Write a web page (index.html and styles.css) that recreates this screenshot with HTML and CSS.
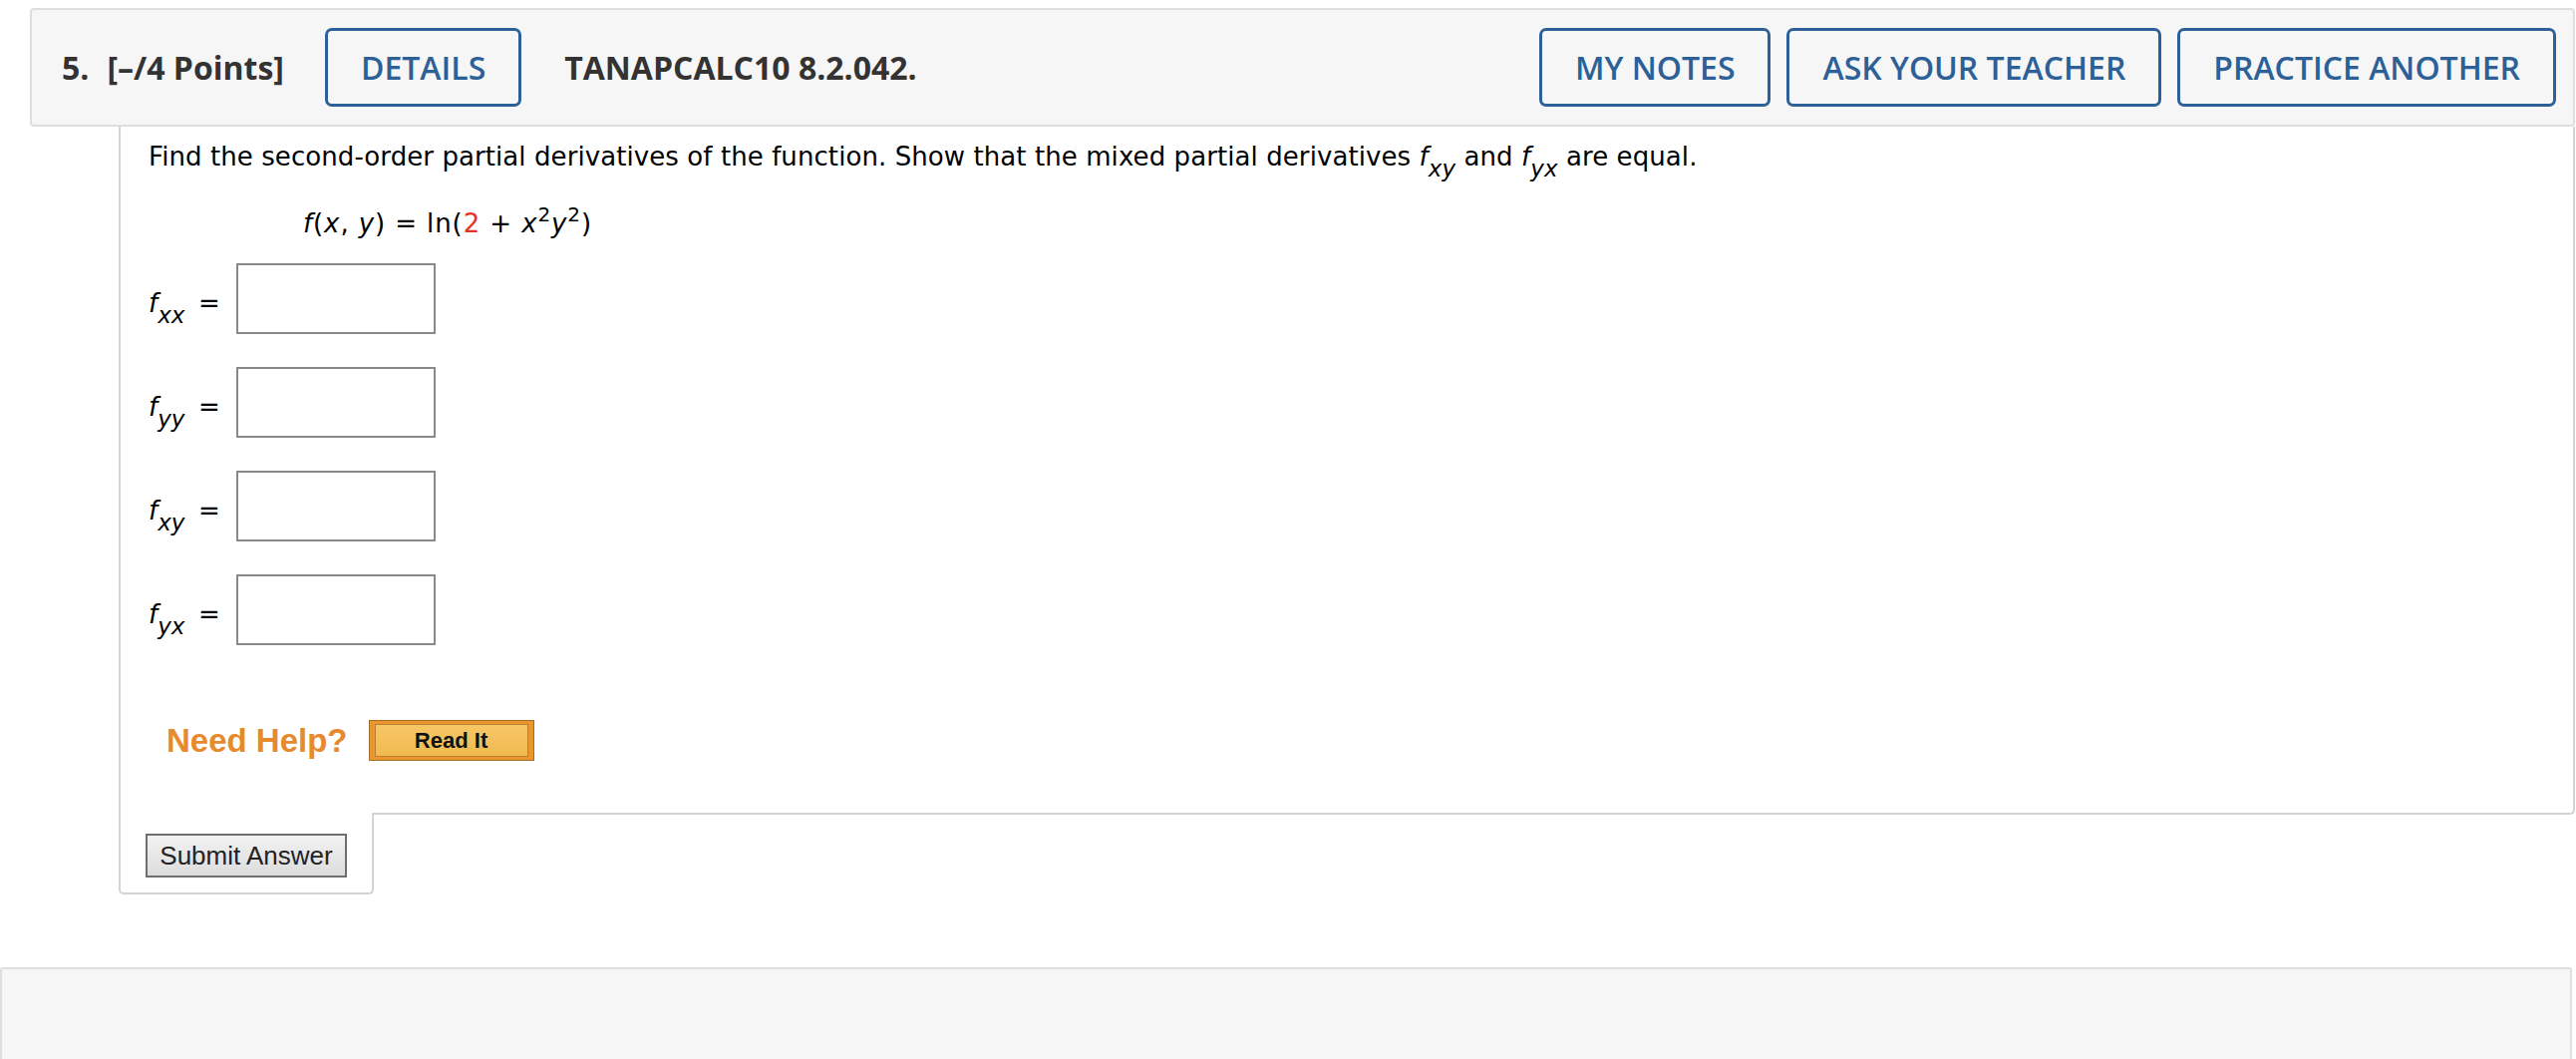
FILE: index.html
```html
<!DOCTYPE html>
<html lang="en">
<head>
<meta charset="utf-8">
<title>Question 5</title>
<link rel="stylesheet" href="styles.css">
</head>
<body>
<div class="question">
  <div class="qhead">
    <span class="qnum">5.</span>
    <span class="qpoints">[–/4 Points]</span>
    <button class="hbtn details">DETAILS</button>
    <span class="qref">TANAPCALC10 8.2.042.</span>
    <div class="hactions">
      <button class="hbtn">MY NOTES</button>
      <button class="hbtn">ASK YOUR TEACHER</button>
      <button class="hbtn">PRACTICE ANOTHER</button>
    </div>
  </div>
  <div class="qbody">
    <p class="prompt">Find the second-order partial derivatives of the function. Show that the mixed partial derivatives <i>f</i><i class="sub">xy</i> and <i>f</i><i class="sub">yx</i> are equal.</p>
    <p class="formula"><i>f</i>(<i>x</i>, <i>y</i>) = ln(<span class="red">2</span> + <i>x</i><span class="sup">2</span><i>y</i><span class="sup">2</span>)</p>
    <div class="answers">
      <div class="arow"><span class="lbl"><i>f</i><i class="sub">xx</i></span><span class="eq">=</span><input class="ans" type="text"></div>
      <div class="arow"><span class="lbl"><i>f</i><i class="sub">yy</i></span><span class="eq">=</span><input class="ans" type="text"></div>
      <div class="arow"><span class="lbl"><i>f</i><i class="sub">xy</i></span><span class="eq">=</span><input class="ans" type="text"></div>
      <div class="arow"><span class="lbl"><i>f</i><i class="sub">yx</i></span><span class="eq">=</span><input class="ans" type="text"></div>
    </div>
    <div class="help">
      <span class="help-title">Need Help?</span>
      <button class="readit"><span class="readit-inner">Read It</span></button>
    </div>
  </div>
  <div class="submit-tab">
    <button class="submit">Submit Answer</button>
  </div>
</div>
<div class="bottom-panel"></div>
</body>
</html>
```

FILE: styles.css
```css
html, body {
  margin: 0;
  padding: 0;
  background: #ffffff;
}

body {
  font-family: "DejaVu Sans", Verdana, sans-serif;
  color: #000;
  overflow: hidden;
}

button {
  font: inherit;
  cursor: pointer;
}

.question {
  padding-top: 8px;
}

/* header bar */
.qhead {
  margin: 0 1px 0 30px;
  height: 119px;
  box-sizing: border-box;
  border: 2px solid #dedede;
  border-radius: 4px;
  background: #f6f6f6;
  display: flex;
  align-items: center;
  padding: 0 17px 0 30px;
  font-family: "Open Sans", "Liberation Sans", sans-serif;
  font-size: 32px;
  font-weight: 700;
  color: #333333;
}

.qnum {
  margin-right: 18px;
}

.qref {
  white-space: nowrap;
}

.hbtn {
  height: 79px;
  box-sizing: border-box;
  border: 3px solid #2c6096;
  border-radius: 7px;
  background: #f6f6f6;
  color: #2c6096;
  font-family: "Open Sans", "Liberation Sans", sans-serif;
  font-size: 32px;
  font-weight: 600;
  padding: 0 33px;
  white-space: nowrap;
}

.details {
  margin: 0 43px 0 41px;
}

.hactions {
  margin-left: auto;
  display: flex;
  gap: 16px;
}

/* body */
.qbody {
  margin: 0 1px 0 119px;
  border: 2px solid #d4d4d4;
  border-top: none;
  border-bottom-right-radius: 5px;
  padding: 15px 0 52px 28px;
  font-size: 26px;
  line-height: 30px;
}

.prompt {
  margin: 0;
  white-space: nowrap;
  letter-spacing: 0.08px;
}

.sub {
  font-size: 23px;
  line-height: 0;
  vertical-align: -11px;
}

.sup {
  font-size: 20px;
  line-height: 0;
  vertical-align: 11px;
}

.red {
  color: #e4342a;
}

.formula {
  margin: 37px 0 0 155px;
  letter-spacing: 0.9px;
}

.answers {
  margin-top: 25px;
  display: flex;
  flex-direction: column;
  gap: 33px;
}

.arow {
  display: flex;
  align-items: flex-start;
  height: 71px;
}

.lbl {
  width: 50px;
  margin-top: 25px;
  white-space: nowrap;
}

.eq {
  margin-top: 25px;
  width: 22px;
}

.ans {
  margin: 0 0 0 16px;
  width: 200px;
  height: 71px;
  box-sizing: border-box;
  border: 2px solid #898989;
  background: #fff;
  padding: 0 8px;
  font-size: 26px;
}

.help {
  margin: 75px 0 0 18px;
  display: flex;
  align-items: center;
  gap: 21px;
  height: 41px;
}

.help-title {
  font-family: "Liberation Sans", Arial, sans-serif;
  font-weight: 700;
  font-size: 33px;
  color: #e68a2e;
  line-height: 41px;
}

.readit {
  width: 166px;
  height: 41px;
  box-sizing: border-box;
  border: 1px solid #a86d24;
  background: #e9962f;
  padding: 3px 5px;
  display: flex;
}

.readit-inner {
  flex: 1;
  border: 1px solid #b9802f;
  background: linear-gradient(#f6c666, #f1ba50);
  font-family: "Liberation Sans", Arial, sans-serif;
  font-weight: 700;
  font-size: 22px;
  line-height: 31px;
  color: #111;
  text-align: center;
}

/* submit tab */
.submit-tab {
  margin: -2px 0 0 119px;
  width: 256px;
  box-sizing: border-box;
  background: #fff;
  border: 2px solid #d4d4d4;
  border-top: none;
  border-radius: 0 0 5px 5px;
  padding: 21px 0 15px 25px;
  position: relative;
}

.submit {
  width: 202px;
  height: 44px;
  box-sizing: border-box;
  border: 2px solid #6e6e6e;
  background: linear-gradient(#f2f2f2, #dcdcdc);
  font-family: "Liberation Sans", Arial, sans-serif;
  font-size: 26px;
  color: #222;
  padding: 0;
  display: block;
}

.bottom-panel {
  margin: 73px 4px 0 0;
  height: 140px;
  background: #f6f6f6;
  border: 2px solid #dedede;
  border-bottom: none;
  border-radius: 3px 3px 0 0;
}
```
